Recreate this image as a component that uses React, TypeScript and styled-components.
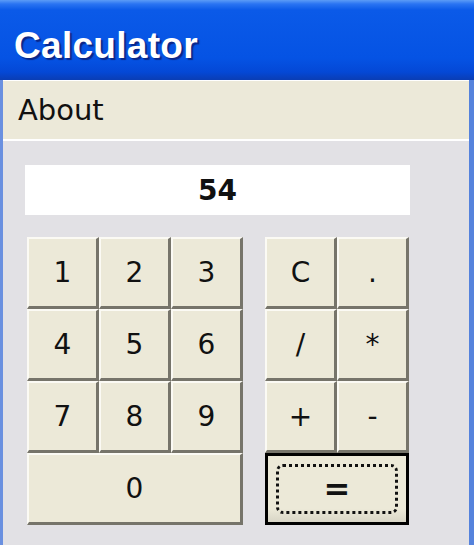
import React from 'react';
import styled, { createGlobalStyle } from 'styled-components';

const GlobalStyle = createGlobalStyle`
	html,
	body {
		margin: 0;
		padding: 0;
		background: #e2e1e5;
	}

	body {
		font-family: 'DejaVu Sans', Tahoma, sans-serif;
	}
`;

const Window = styled.div`
	width: 474px;
	height: 545px;
	display: flex;
	flex-direction: column;
	overflow: hidden;
	background: #e2e1e5;
`;

const TitleBar = styled.div`
	height: 80px;
	flex: none;
	box-sizing: border-box;
	display: flex;
	align-items: center;
	padding: 12px 0 0 14px;
	background: linear-gradient(
		to bottom,
		#5c9cf6 0px,
		#2a74f2 4px,
		#0b5ae8 10px,
		#0553e4 58px,
		#0448d6 72px,
		#0a3db4 80px
	);
`;

const Title = styled.h1`
	margin: 0;
	font: bold 37px 'Liberation Sans', Arial, sans-serif;
	color: #fff;
	text-shadow: 2px 2px 1px #0b2788;
	letter-spacing: 0.3px;
`;

const Frame = styled.div`
	flex: 1;
	display: flex;
	flex-direction: column;
	border-left: 3px solid #6a90e0;
	border-right: 5px solid #5582dc;
	background: #e2e1e5;
`;

const MenuBar = styled.div`
	height: 58px;
	flex: none;
	display: flex;
	align-items: center;
	padding-left: 15px;
	background: #ece9d9;
	border-top: 1px solid #fff;
	border-bottom: 2px solid #fff;
	font-size: 29px;
	color: #111;
`;

const Body = styled.div`
	display: flex;
	flex-direction: column;
	padding: 24px 0 0 22px;
`;

const Display = styled.div`
	width: 385px;
	height: 50px;
	display: flex;
	align-items: center;
	justify-content: center;
	background: #fff;
	font-weight: bold;
	font-size: 28px;
	color: #111;
`;

const Keypad = styled.div`
	display: flex;
	gap: 22px;
	margin: 22px 0 0 2px;
`;

const KeyGrid = styled.div<{ cols: number }>`
	display: grid;
	grid-template-columns: repeat(${(props) => props.cols}, 72px);
	grid-auto-rows: 72px;
`;

const Key = styled.button<{ span?: number }>`
	grid-column: span ${(props) => props.span || 1};
	box-sizing: border-box;
	margin: 0;
	padding: 0;
	display: flex;
	align-items: center;
	justify-content: center;
	background: #ece9d8;
	border-style: solid;
	border-width: 2px 3px 3px 2px;
	border-color: #fbfaf4 #76746a #76746a #fbfaf4;
	font-family: 'DejaVu Sans', Tahoma, sans-serif;
	font-size: 28px;
	color: #111;
	cursor: pointer;
`;

const DefaultKey = styled(Key)`
	border: 3px solid #000;
	padding: 8px;
	background: linear-gradient(to bottom, #ece9d8 80%, #d8d5c6 100%);
`;

const FocusRing = styled.span`
	flex: 1;
	align-self: stretch;
	display: flex;
	align-items: center;
	justify-content: center;
	border: 3px dotted #111;
	border-radius: 7px;
	font-weight: bold;
	font-size: 32px;
`;

const digits = ['1', '2', '3', '4', '5', '6', '7', '8', '9'];
const operators = ['C', '.', '/', '*', '+', '-'];

const App: React.FC = () => {
	return (
		<>
			<GlobalStyle />
			<Window>
				<TitleBar>
					<Title>Calculator</Title>
				</TitleBar>
				<Frame>
					<MenuBar>About</MenuBar>
					<Body>
						<Display>54</Display>
						<Keypad>
							<KeyGrid cols={3}>
								{digits.map((d) => (
									<Key key={d}>{d}</Key>
								))}
								<Key span={3}>0</Key>
							</KeyGrid>
							<KeyGrid cols={2}>
								{operators.map((op) => (
									<Key key={op}>{op}</Key>
								))}
								<DefaultKey span={2}>
									<FocusRing>=</FocusRing>
								</DefaultKey>
							</KeyGrid>
						</Keypad>
					</Body>
				</Frame>
			</Window>
		</>
	);
};

export default App;
